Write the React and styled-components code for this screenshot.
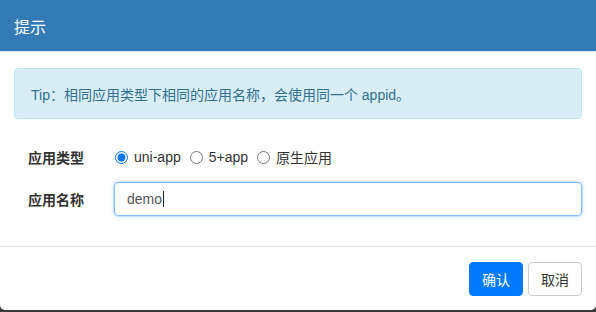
import React from "react";
import styled, { createGlobalStyle } from "styled-components";

const GlobalStyle = createGlobalStyle`
  *, *:before, *:after { box-sizing: border-box; }
  html, body {
    margin: 0;
    padding: 0;
    background: #3b3b3b;
    font-family: "Liberation Sans", "Noto Sans CJK SC", sans-serif;
  }
`;

const Modal = styled.div`
  width: 596px;
  height: 310px;
  background: #fff;
  border-radius: 0 0 5px 5px;
  overflow: hidden;
  display: flex;
  flex-direction: column;
`;

const Header = styled.div`
  height: 52px;
  flex: none;
  background: #337ab7;
  color: #fff;
  font-size: 16px;
  padding: 0 14px;
  display: flex;
  align-items: center;
  border-bottom: 1px solid #e5e5e5;
`;

const Body = styled.div`
  padding: 16px 14px 30px;
  flex: none;
`;

const Alert = styled.div`
  height: 51px;
  padding: 0 16px;
  display: flex;
  align-items: center;
  background: #d9edf7;
  border: 1px solid #bce8f1;
  border-radius: 4px;
  color: #31708f;
  font-size: 14px;
`;

const Form = styled.div`
  margin-top: 20px;
  padding-left: 14px;
  display: flex;
  flex-direction: column;
  gap: 7px;
`;

const Row = styled.div`
  display: flex;
  align-items: center;
  height: ${(p) => p.$h}px;
`;

const Label = styled.div`
  width: 86px;
  flex: none;
  font-size: 14px;
  font-weight: bold;
  color: #333;
`;

const Radios = styled.div`
  display: flex;
  align-items: center;
  gap: 8px;
  font-size: 14px;
  color: #333;
`;

const RadioLabel = styled.label`
  display: flex;
  align-items: center;
  gap: 6px;
`;

const Radio = styled.input`
  margin: 0 0 0 1px;
  width: 13px;
  height: 13px;
  accent-color: #0075ff;
`;

const FakeInput = styled.div`
  flex: 1;
  height: 34px;
  border: 1px solid #80bdff;
  border-radius: 4px;
  box-shadow: 0 0 0 1px rgba(0, 123, 255, 0.12), 0 0 4px rgba(0, 123, 255, 0.25);
  padding: 0 12px;
  display: flex;
  align-items: center;
  font-size: 14px;
  color: #555;
`;

const Caret = styled.span`
  display: inline-block;
  width: 1px;
  height: 16px;
  background: #222;
  margin-left: 1px;
`;

const Footer = styled.div`
  border-top: 1px solid #e5e5e5;
  padding: 15px 14px;
  display: flex;
  justify-content: flex-end;
  gap: 5px;
`;

const Button = styled.button`
  height: 34px;
  padding: 0 12px;
  font-size: 14px;
  font-family: inherit;
  border-radius: 4px;
  border: 1px solid ${(p) => (p.$primary ? "#007bff" : "#ccc")};
  background: ${(p) => (p.$primary ? "#007bff" : "#fff")};
  color: ${(p) => (p.$primary ? "#fff" : "#333")};
`;

export default function App() {
  return (
    <>
      <GlobalStyle />
      <Modal>
        <Header>提示</Header>
        <Body>
          <Alert>Tip：相同应用类型下相同的应用名称，会使用同一个 appid。</Alert>
          <Form>
            <Row $h={36}>
              <Label>应用类型</Label>
              <Radios>
                <RadioLabel>
                  <Radio type="radio" name="t" defaultChecked />
                  uni-app
                </RadioLabel>
                <RadioLabel>
                  <Radio type="radio" name="t" />
                  5+app
                </RadioLabel>
                <RadioLabel>
                  <Radio type="radio" name="t" />
                  原生应用
                </RadioLabel>
              </Radios>
            </Row>
            <Row $h={34}>
              <Label>应用名称</Label>
              <FakeInput>
                demo<Caret />
              </FakeInput>
            </Row>
          </Form>
        </Body>
        <Footer>
          <Button $primary>确认</Button>
          <Button>取消</Button>
        </Footer>
      </Modal>
    </>
  );
}
